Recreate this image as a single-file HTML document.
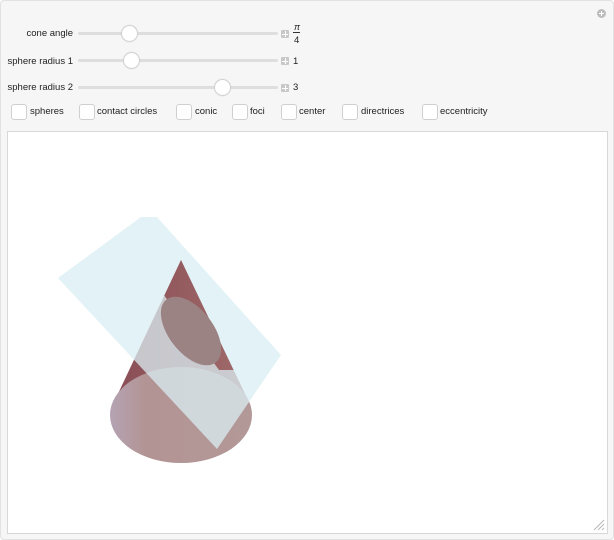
<!DOCTYPE html>
<html><head><style>
body{margin:0;width:614px;height:540px;background:#fff;font-family:"Liberation Sans",sans-serif;font-size:9.5px;color:#222;position:relative;overflow:hidden}
.frame{position:absolute;left:0;top:0;width:612px;height:538px;background:#f6f6f6;border:1px solid #e2e2e2;border-radius:4px}
.lbl{position:absolute;text-align:right;width:70px}
.track{position:absolute;left:78px;width:200px;height:3px;background:#dedede;border-radius:2px}
.knob{position:absolute;width:15px;height:15px;border-radius:50%;background:#fff;box-shadow:0 0 1px 1px #ccc}
.plus{position:absolute;left:281px;width:8px;height:8px;background:#c8c8c8;border-radius:1px}
.plus:before{content:"";position:absolute;left:1px;top:3.5px;width:6px;height:1px;background:#fff}
.plus:after{content:"";position:absolute;left:3.5px;top:1px;width:1px;height:6px;background:#fff}
.cb{position:absolute;top:104px;width:14px;height:14px;background:#fff;border:1px solid #cfcfcf;border-radius:3px}
.ct{position:absolute;top:106px}
.plot{position:absolute;left:7px;top:131px;width:599px;height:401px;background:#fff;border:1px solid #d8d8d8}
</style></head><body>
<div class="frame"></div>
<div style="position:absolute;left:597px;top:9px;width:9px;height:9px;border-radius:50%;background:#bdbdbd"></div>
<div style="position:absolute;left:599px;top:13px;width:5px;height:1px;background:#fff"></div>
<div style="position:absolute;left:601px;top:11px;width:1px;height:5px;background:#fff"></div>

<div class="lbl" style="left:3px;top:28px">cone angle</div>
<div class="track" style="top:32px"></div><div class="knob" style="left:122px;top:26px"></div>
<div class="plus" style="top:30px"></div>
<div style="position:absolute;left:294px;top:22px;font-style:italic;font-size:9px">π</div>
<div style="position:absolute;left:293px;top:32px;width:7px;height:1px;background:#333"></div>
<div style="position:absolute;left:294px;top:35px">4</div>

<div class="lbl" style="left:3px;top:56px">sphere radius 1</div>
<div class="track" style="top:59px"></div><div class="knob" style="left:124px;top:53px"></div>
<div class="plus" style="top:57px"></div><div style="position:absolute;left:293px;top:56px">1</div>

<div class="lbl" style="left:3px;top:82px">sphere radius 2</div>
<div class="track" style="top:86px"></div><div class="knob" style="left:215px;top:80px"></div>
<div class="plus" style="top:84px"></div><div style="position:absolute;left:293px;top:82px">3</div>

<div class="cb" style="left:11px"></div><div class="ct" style="left:30px">spheres</div>
<div class="cb" style="left:79px"></div><div class="ct" style="left:97px">contact circles</div>
<div class="cb" style="left:176px"></div><div class="ct" style="left:195px">conic</div>
<div class="cb" style="left:232px"></div><div class="ct" style="left:250px">foci</div>
<div class="cb" style="left:281px"></div><div class="ct" style="left:299px">center</div>
<div class="cb" style="left:342px"></div><div class="ct" style="left:361px">directrices</div>
<div class="cb" style="left:422px"></div><div class="ct" style="left:440px">eccentricity</div>

<div class="plot"></div>
<svg style="position:absolute;left:0;top:0" width="614" height="540">
<defs><linearGradient id="g" x1="0" x2="1" y1="0" y2="0">
<stop offset="0" stop-color="#b4a3b3"/><stop offset="0.25" stop-color="#b39494"/><stop offset="1" stop-color="#b39898"/></linearGradient>
<linearGradient id="g2" x1="0" x2="1"><stop offset="0" stop-color="#8a4e56"/><stop offset="1" stop-color="#a06a6a"/></linearGradient>
<clipPath id="c"><polygon points="50,140 219,370 300,370 300,140"/></clipPath></defs>
<polygon points="181,260 116,398 247,398" fill="url(#g2)"/>
<ellipse cx="181" cy="415" rx="71" ry="48" fill="url(#g)"/>
<polygon points="58,278 141,217 157,217 281,355 217,449" fill="#d9eef3" fill-opacity="0.75"/>
<polygon points="181,260 116,398 247,398" fill="url(#g2)" clip-path="url(#c)"/>
<ellipse cx="191" cy="331" rx="40" ry="22" transform="rotate(52 191 331)" fill="#9c8383"/>
<g stroke="#b8b8b8" stroke-width="1"><line x1="594" y1="530" x2="604" y2="520"/><line x1="598" y1="530" x2="604" y2="524"/><line x1="602" y1="530" x2="604" y2="528"/></g>
</svg>
</body></html>
